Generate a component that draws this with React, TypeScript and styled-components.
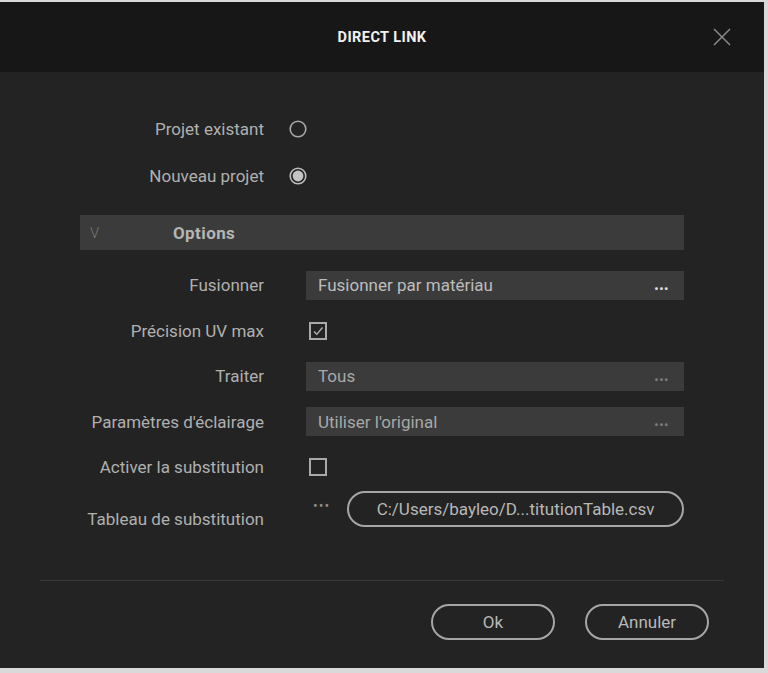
import styled, { createGlobalStyle } from 'styled-components'

const GlobalStyle = createGlobalStyle`
  html, body {
    margin: 0;
    padding: 0;
    background: #d9d9d9;
  }
  body {
    font-family: Roboto, 'Liberation Sans', sans-serif;
  }
`

// ── Frame ────────────────────────────────────────────────────────────────────

const Dialog = styled.div`
  width: 764px;
  height: 666px;
  margin-top: 2px;
  background: #232323;
  display: flex;
  flex-direction: column;
  color: #b3b3b3;
`

const Header = styled.header`
  height: 70px;
  background: #171717;
  display: flex;
  align-items: center;
  justify-content: center;
  position: relative;
`

const Title = styled.h1`
  margin: 0;
  font-size: 14.5px;
  font-weight: 700;
  letter-spacing: 0.03em;
  color: #f2f2f2;
`

const CloseButton = styled.button`
  position: absolute;
  right: 33px;
  top: 26px;
  width: 18px;
  height: 18px;
  padding: 0;
  border: none;
  background: none;
  cursor: pointer;
  svg { display: block; }
`

const Body = styled.div`
  flex: 1;
  display: flex;
  flex-direction: column;
  padding: 45px 80px 0;
`

// ── Project choice ───────────────────────────────────────────────────────────

const RadioGroup = styled.div`
  display: grid;
  grid-template-columns: 184px 1fr;
  column-gap: 25px;
  row-gap: 23px;
  align-items: center;
`

const Label = styled.span<{ $end?: boolean }>`
  text-align: right;
  font-size: 17px;
  color: #b0b0b0;
  white-space: nowrap;
  align-self: ${({ $end }) => ($end ? 'end' : 'center')};
  line-height: 24px;
  ${({ $end }) => ($end ? 'margin-bottom: -3px;' : '')}
`

const RadioDot = styled.span`
  width: 18px;
  height: 24px;
  display: flex;
  align-items: center;
`

// ── Options ──────────────────────────────────────────────────────────────────

const OptionsBar = styled.div`
  margin-top: 27px;
  height: 35px;
  background: #3b3b3b;
  display: flex;
  align-items: center;
  padding-left: 10px;
  gap: 68px;
`

const Chevron = styled.span`
  font-size: 15px;
  font-weight: 300;
  color: #767676;
  width: 15px;
`

const OptionsTitle = styled.span`
  font-size: 17px;
  font-weight: 700;
  letter-spacing: 0.4px;
  color: #b5b5b5;
`

const Form = styled.div`
  margin-top: 20px;
  display: grid;
  grid-template-columns: 184px 1fr;
  column-gap: 42px;
  row-gap: 15.5px;
  grid-auto-rows: minmax(30px, auto);
`

const Select = styled.div<{ $bright?: boolean }>`
  height: 29px;
  align-self: center;
  background: #3b3b3b;
  display: flex;
  align-items: center;
  justify-content: space-between;
  padding: 0 15px 0 12px;
  font-size: 17px;
  color: ${({ $bright }) => ($bright ? '#bdbdbd' : '#a8a8a8')};
`

const Dots = styled.span<{ $bright?: boolean }>`
  font-size: 13px;
  letter-spacing: 0.5px;
  color: ${({ $bright }) => ($bright ? '#e0e0e0' : '#7c7c7c')};
  transform: translateY(3px);
`

const CheckBox = styled.span`
  width: 18px;
  height: 18px;
  align-self: center;
  margin-left: 3px;
  box-sizing: border-box;
  border: 2px solid #a9a9a9;
  display: flex;
  align-items: center;
  justify-content: center;
`

const PathRow = styled.div`
  display: flex;
  align-items: center;
  gap: 17px;
  margin-top: -6.5px;
`

const PathDots = styled.span`
  font-size: 14px;
  color: #8a8a8a;
  padding-left: 7px;
  letter-spacing: 1px;
  transform: translateY(-3px);
`

const PillButton = styled.button<{ $wide?: boolean }>`
  height: 36px;
  box-sizing: border-box;
  border: 2px solid #a6a6a6;
  border-radius: 999px;
  background: transparent;
  color: #b8b8b8;
  font-family: Roboto, 'Liberation Sans', sans-serif;
  font-size: 17px;
  padding: 0 20px;
  cursor: pointer;
  ${({ $wide }) => ($wide ? 'flex: 1;' : 'width: 124px;')}
`

// ── Footer ───────────────────────────────────────────────────────────────────

const Divider = styled.hr`
  margin: 52px -40px 0;
  border: none;
  border-top: 1px solid #393939;
`

const Footer = styled.div`
  display: flex;
  justify-content: flex-end;
  gap: 30px;
  margin: 23px -25px 0 0;
`

// ── Component ────────────────────────────────────────────────────────────────

function Radio({ checked }: { checked?: boolean }) {
  return (
    <RadioDot>
      <svg width="18" height="18" viewBox="0 0 18 18">
        <circle cx="9" cy="9" r="7.8" fill="none" stroke={checked ? '#bdbdbd' : '#a9a9a9'} strokeWidth="1.6" />
        {checked && <circle cx="9" cy="9" r="5.4" fill="#c4c4c4" />}
      </svg>
    </RadioDot>
  )
}

export default function App() {
  return (
    <>
      <GlobalStyle />
      <Dialog>
        <Header>
          <Title>DIRECT LINK</Title>
          <CloseButton aria-label="Fermer">
            <svg width="18" height="18" viewBox="0 0 18 18">
              <path d="M1 1 L17 17 M17 1 L1 17" stroke="#8a8a8a" strokeWidth="1.5" />
            </svg>
          </CloseButton>
        </Header>

        <Body>
          <RadioGroup>
            <Label>Projet existant</Label>
            <Radio />
            <Label>Nouveau projet</Label>
            <Radio checked />
          </RadioGroup>

          <OptionsBar>
            <Chevron>V</Chevron>
            <OptionsTitle>Options</OptionsTitle>
          </OptionsBar>

          <Form>
            <Label>Fusionner</Label>
            <Select $bright>
              Fusionner par matériau
              <Dots $bright>•••</Dots>
            </Select>

            <Label>Précision UV max</Label>
            <CheckBox>
              <svg width="12" height="12" viewBox="0 0 12 12">
                <path d="M2 6.5 L4.8 9.3 L10.5 2.5" fill="none" stroke="#b5b5b5" strokeWidth="1.3" />
              </svg>
            </CheckBox>

            <Label>Traiter</Label>
            <Select>
              Tous
              <Dots>•••</Dots>
            </Select>

            <Label>Paramètres d'éclairage</Label>
            <Select>
              Utiliser l'original
              <Dots>•••</Dots>
            </Select>

            <Label>Activer la substitution</Label>
            <CheckBox />

            <Label $end>Tableau de substitution</Label>
            <PathRow>
              <PathDots>•••</PathDots>
              <PillButton $wide>C:/Users/bayleo/D...titutionTable.csv</PillButton>
            </PathRow>
          </Form>

          <Divider />

          <Footer>
            <PillButton>Ok</PillButton>
            <PillButton>Annuler</PillButton>
          </Footer>
        </Body>
      </Dialog>
    </>
  )
}
